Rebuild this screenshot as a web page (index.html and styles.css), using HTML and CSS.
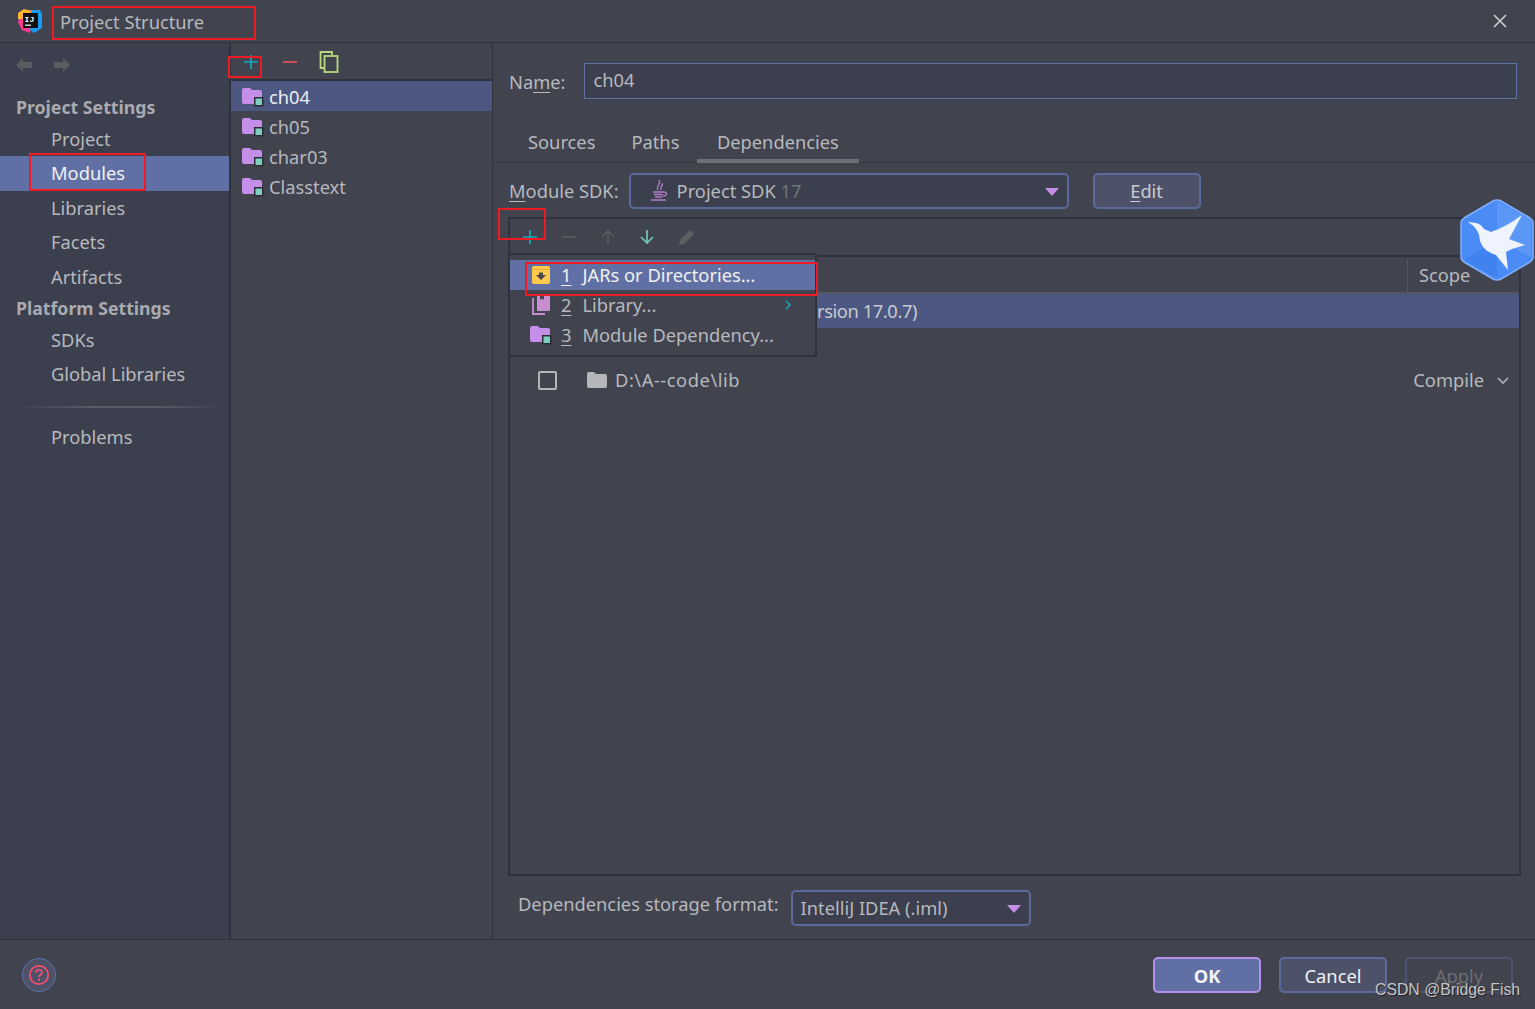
FILE: index.html
```html
<!DOCTYPE html>
<html lang="en">
<head>
<meta charset="utf-8">
<title>Project Structure</title>
<link rel="stylesheet" href="styles.css">
</head>
<body>
<div class="dialog">
  <header class="titlebar">
    <svg class="applogo" viewBox="0 0 24 24" width="24" height="24">
      <path d="M3 3 L14 1 L14 12 L12 24 L4 21 L0 13Z" fill="#ff3d8b"/>
      <path d="M14 1 L22 1 L24 5 L24 19 L16 24 L12 21Z" fill="#1b9cf2"/>
      <path d="M0 4 L6 0 L14 2 L6 10 L0 10Z" fill="#ffb52e"/>
      <rect x="5" y="4" width="15" height="15" fill="#111"/>
      <rect x="7" y="15.5" width="6" height="1.4" fill="#ddd"/>
      <text x="6.6" y="12.5" class="logotext">IJ</text>
    </svg>
    <span class="title">Project Structure</span>
    <svg class="close" viewBox="0 0 14 14" width="14" height="14"><path d="M1 1 L13 13 M13 1 L1 13" stroke="#c9ccd2" stroke-width="1.7"/></svg>
  </header>

  <div class="body">
    <nav class="sidebar">
      <div class="navarrows">
        <svg viewBox="0 0 16 14" width="16" height="14"><path d="M0 7 L7 0 V4 H16 V10 H7 V14Z" fill="#5b5c60"/></svg>
        <svg viewBox="0 0 16 14" width="16" height="14"><path d="M16 7 L9 0 V4 H0 V10 H9 V14Z" fill="#5b5c60"/></svg>
      </div>
      <div class="navhead first">Project Settings</div>
      <div class="navitem">Project</div>
      <div class="navitem active">Modules</div>
      <div class="navitem">Libraries</div>
      <div class="navitem">Facets</div>
      <div class="navitem">Artifacts</div>
      <div class="navhead second">Platform Settings</div>
      <div class="navitem">SDKs</div>
      <div class="navitem">Global Libraries</div>
      <div class="navsep"></div>
      <div class="navitem">Problems</div>
    </nav>

    <section class="modules">
      <div class="modtools">
        <svg viewBox="0 0 16 16" width="16" height="16"><path d="M8 1 V15 M1 8 H15" stroke="#12a9bd" stroke-width="1.7"/></svg>
        <svg viewBox="0 0 16 16" width="16" height="16"><path d="M1 8 H15" stroke="#e5505a" stroke-width="1.7"/></svg>
        <svg viewBox="0 0 20 22" width="20" height="22"><path d="M5 17 H1.5 V1 H13 V4" fill="none" stroke="#b8d97c" stroke-width="1.8"/><rect x="5.5" y="5" width="13" height="16" fill="none" stroke="#b8d97c" stroke-width="1.8"/></svg>
      </div>
      <ul class="modlist">
        <li class="mod selected"><svg class="modicon" viewBox="0 0 22 20" width="22" height="20"><use href="#folder"/></svg>ch04</li>
        <li class="mod"><svg class="modicon" viewBox="0 0 22 20" width="22" height="20"><use href="#folder"/></svg>ch05</li>
        <li class="mod"><svg class="modicon" viewBox="0 0 22 20" width="22" height="20"><use href="#folder"/></svg>char03</li>
        <li class="mod"><svg class="modicon" viewBox="0 0 22 20" width="22" height="20"><use href="#folder"/></svg>Classtext</li>
      </ul>
    </section>

    <main class="detail">
      <div class="namerow">
        <label class="namelabel">Na<u>m</u>e:</label>
        <div class="nameinput">ch04</div>
      </div>
      <div class="tabs">
        <span class="tab">Sources</span>
        <span class="tab">Paths</span>
        <span class="tab current">Dependencies</span>
      </div>
      <div class="sdkrow">
        <span class="sdklabel"><u>M</u>odule SDK:</span>
        <div class="combo sdkcombo">
          <svg class="java" viewBox="0 0 20 24" width="20" height="24">
            <path d="M10 1 C13 5 6 7 9 11 M13 4 C15 7 10 8 12 11" fill="none" stroke="#b07fc7" stroke-width="1.3"/>
            <path d="M4 13 H15 M5 15.5 H14 M6 18 H13 M2 21 H17 M15 13 C19 13 18 17 14 17" fill="none" stroke="#b07fc7" stroke-width="1.3"/>
          </svg>
          <span class="sdkname">Project SDK <span class="dim">17</span></span>
          <i class="caret"></i>
        </div>
        <button class="btn editbtn"><u>E</u>dit</button>
      </div>
      <div class="deps">
        <div class="deptools">
          <svg viewBox="0 0 16 16" width="16" height="16"><path d="M8 1 V15 M1 8 H15" stroke="#12a9bd" stroke-width="1.7"/></svg>
          <svg viewBox="0 0 16 16" width="16" height="16"><path d="M1 8 H15" stroke="#5b5c60" stroke-width="1.7"/></svg>
          <svg viewBox="0 0 16 16" width="16" height="16"><path d="M8 15 V2 M2 8 L8 2 L14 8" fill="none" stroke="#5b5c60" stroke-width="1.7"/></svg>
          <svg viewBox="0 0 16 16" width="16" height="16"><path d="M8 1 V14 M2 8 L8 14 L14 8" fill="none" stroke="#6fc7b5" stroke-width="1.7"/></svg>
          <svg viewBox="0 0 18 18" width="18" height="18"><path d="M1 17 L2 12 L12 2 L16 6 L6 16Z" fill="#5e5f63"/></svg>
        </div>
        <div class="dephead"><span class="scopehead">Scope</span></div>
        <div class="deprow sdkrowsel"><span class="sdktext">rsion 17.0.7)</span></div>
        <div class="deprow lib">
          <i class="check"></i>
          <svg class="libfolder" viewBox="0 0 20 16" width="20" height="16"><path d="M0 2 Q0 0 2 0 H7 L9 2 H18 Q20 2 20 4 V14 Q20 16 18 16 H2 Q0 16 0 14Z" fill="#b4b6ba"/></svg>
          <span class="libpath">D:\A--code\lib</span>
          <span class="scope">Compile</span>
          <svg class="chevron" viewBox="0 0 12 8" width="12" height="8"><path d="M1 1 L6 6 L11 1" fill="none" stroke="#b0b2b8" stroke-width="1.6"/></svg>
        </div>
      </div>
      <div class="storage">
        <span class="storagelabel">Dependencies storage format:</span>
        <div class="combo storecombo"><span>IntelliJ IDEA (.iml)</span><i class="caret"></i></div>
      </div>
    </main>
  </div>

  <footer class="footer">
    <button class="help" aria-label="Help">
      <svg viewBox="0 0 22 22" width="22" height="22"><circle cx="11" cy="11" r="9.2" fill="none" stroke="#ff4d6d" stroke-width="1.7"/><path d="M8 8.6 C8 4.8 14 4.8 14 8.6 C14 10.8 11 10.6 11 13" fill="none" stroke="#ff4d6d" stroke-width="1.7"/><rect x="10" y="14.6" width="2" height="2" fill="#ff4d6d"/></svg>
    </button>
    <div class="actions">
      <button class="btn okbtn">OK</button>
      <button class="btn cancelbtn">Cancel</button>
      <button class="btn applybtn">Apply</button>
    </div>
  </footer>

  <div class="popup">
    <div class="popitem on">
      <svg viewBox="0 0 18 18" width="18" height="18"><rect width="18" height="18" rx="2" fill="#ffc94d"/><path d="M0 3.5 H18" stroke="#e9ad35"/><path d="M4 9 H14 L9 14Z M7 6.5 H11 V10 H7Z" fill="#4a4a55"/></svg>
      <span class="num">1</span><span class="poptext">JARs or Directories...</span>
    </div>
    <div class="popitem">
      <svg viewBox="0 0 18 20" width="18" height="20"><path d="M1 3 V19 H13" fill="none" stroke="#c88fd0" stroke-width="1.8"/><rect x="5" y="0" width="13" height="16" rx="1" fill="#c88fd0"/><path d="M8 0 H12 V5 L10 3.5 L8 5Z" fill="#41434f"/></svg>
      <span class="num">2</span><span class="poptext">Library...</span>
      <svg class="sub" viewBox="0 0 6 10" width="6" height="10"><path d="M1 1 L5 5 L1 9" fill="none" stroke="#12a9bd" stroke-width="1.5"/></svg>
    </div>
    <div class="popitem">
      <svg viewBox="0 0 22 20" width="22" height="20" class="popfolder"><use href="#folder"/></svg>
      <span class="num">3</span><span class="poptext">Module Dependency...</span>
    </div>
  </div>

  <svg class="bird" viewBox="0 0 74 82" width="74" height="82">
    <path d="M37 1 Q39 1 41 2 L70 19 Q73 21 73 24 V58 Q73 61 70 63 L41 80 Q37 82 33 80 L4 63 Q1 61 1 58 V24 Q1 21 4 19 L33 2 Q35 1 37 1Z" fill="#4a8bf5" stroke="#7fb0fa" stroke-width="1.5"/>
    <path d="M37 2 L71 21 V58 L37 41Z" fill="#5a97f7"/>
    <path d="M4 61 L37 41 L37 79Z" fill="#4183ee"/>
    <path d="M8 23 L16 24 Q21 25 24 30 L31 33 Q46 28 62 16 L55 29 L49 40 L65 46 L52 50 L46 53 L48 71 L36 56 Q23 52 20 42 Q20 30 8 23Z" fill="#eef3fd"/>
  </svg>

  <span class="mark mark-title"></span>
  <span class="mark mark-add"></span>
  <span class="mark mark-modules"></span>
  <span class="mark mark-depadd"></span>
  <span class="mark mark-jars"></span>
  <span class="watermark">CSDN @Bridge Fish</span>

  <svg class="defs" width="0" height="0">
    <defs>
      <g id="folder">
        <path d="M0 3 Q0 1 2 1 H8 L10 3 H18 Q20 3 20 5 V15 Q20 17 18 17 H2 Q0 17 0 15Z" fill="#c58ee8"/>
        <rect x="12" y="10" width="9.5" height="9.5" fill="#2b2d36"/>
        <rect x="13.5" y="11.5" width="6.5" height="6.5" fill="#7fcfc0"/>
      </g>
    </defs>
  </svg>
</div>
</body>
</html>
```
FILE: styles.css
```css
* { box-sizing: border-box; }
html, body { margin: 0; padding: 0; }
body { width: 1535px; height: 1009px; overflow: hidden; background: #41434f; }
.dialog {
  position: relative; width: 1535px; height: 1009px;
  display: flex; flex-direction: column;
  background: #41434f; color: #b7b9bd;
  font-family: "Noto Sans", "Open Sans", sans-serif; font-size: 18.3px;
}
u { text-underline-offset: 3px; }

.titlebar { height: 43px; flex: none; display: flex; align-items: center; padding: 0 28px 0 18px; border-bottom: 1px solid #2f313b; }
.applogo { flex: none; margin-right: 18px; }
.logotext { font: bold 8px "Liberation Mono", monospace; fill: #fff; }
.title { flex: 1; color: #b7b9bd; }
.close { flex: none; }

.body { flex: 1; display: flex; min-height: 0; }
.sidebar { width: 231px; flex: none; background: #3c3f4d; border-right: 2px solid #2f313b; }
.navarrows { display: flex; gap: 22px; padding: 15px 0 0 16px; height: 48px; }
.navhead { font-weight: 700; font-size: 17.7px; color: #a9abb0; padding-left: 16px; }
.navhead.first { height: 30.5px; line-height: 32px; }
.navhead.second { height: 28.5px; line-height: 28px; }
.navitem { height: 34.5px; line-height: 34px; padding-left: 51px; }
.navitem.active { background: #6070a4; color: #f0f0f2; }
.navsep { height: 2px; margin: 14px 8px 12.5px 12px; background: linear-gradient(90deg, #3c3f4d, #5a5c66 40%, #5a5c66 70%, #3c3f4d); }

.modules { width: 262px; flex: none; border-right: 1px solid #2f313b; }
.modtools { height: 38px; display: flex; align-items: center; gap: 23px; padding: 2px 0 0 12px; border-bottom: 2px solid #2f313b; }
.modtools svg:last-child { margin-left: -2px; }
.modlist { list-style: none; margin: 0; padding: 0; }
.mod { height: 30px; display: flex; align-items: center; gap: 5px; padding-left: 11px; }
.mod.selected { background: #4c5882; color: #eceef2; }
.modicon { flex: none; margin-top: 2px; }

.detail { flex: 1; min-width: 0; display: flex; flex-direction: column; padding-top: 20px; }
.namerow { display: flex; align-items: center; gap: 19px; padding: 0 18px 0 16px; }
.namelabel { flex: none; }
.nameinput { flex: 1; height: 36px; line-height: 31px; padding-left: 8px; border: 1px solid #6070a4; background: #3c3f4d; }
.tabs { display: flex; height: 41px; margin-top: 23px; padding-left: 16.5px; border-bottom: 1px solid #33353f; }
.tab { padding: 0 18.5px; height: 41px; line-height: 40px; }
.tab + .tab { margin-left: -1px; }
.tab.current { border-bottom: 4px solid #6e7078; padding: 0 20px; }
.sdkrow { display: flex; align-items: center; height: 36px; margin-top: 10px; padding-left: 16px; }
.sdklabel { flex: none; margin-right: 10px; margin-top: -2px; }
.combo { display: flex; align-items: center; position: relative; height: 36px; border: 2px solid #5a6a9c; border-radius: 5px; background: #3c3f4d; }
.sdkcombo { width: 440px; padding-left: 18px; gap: 8px; }
.sdkname { margin-top: -2px; }
.java { flex: none; }
.dim { color: #737478; }
.caret { position: absolute; right: 8px; top: 13px; width: 0; height: 0; border-left: 7px solid transparent; border-right: 7px solid transparent; border-top: 8px solid #c58ee8; }
.btn { font: inherit; color: #c9cbd0; border: 2px solid #5a6a9c; border-radius: 5px; background: #4e5269; height: 36px; padding: 0; }
.editbtn { width: 108px; margin-left: 24px; padding-bottom: 2px; }

.deps { flex: 1; margin: 8px 14px 0 15px; border: 2px solid #2f313b; display: flex; flex-direction: column; min-height: 0; }
.deptools { height: 38px; flex: none; display: flex; align-items: center; gap: 23px; padding-left: 12px; border-bottom: 2px solid #2f313b; }
.dephead { height: 35px; flex: none; display: flex; justify-content: flex-end; }
.scopehead { width: 112px; border-left: 1px solid #55575f; padding-left: 11px; line-height: 32px; margin-top: 2px; height: 33px; }
.deprow { display: flex; align-items: center; flex: none; }
.sdkrowsel { height: 36px; background: #4c5882; color: #c9cbd0; padding: 0 0 2px 307px; border-top: 2px solid #55575f; }
.sdktext { letter-spacing: -.4px; }
.lib { height: 36px; margin-top: 34px; padding: 0 10px 0 28px; }
.check { width: 19px; height: 19px; border: 2px solid #b4b6ba; border-radius: 2px; flex: none; }
.libfolder { flex: none; margin-left: 30px; }
.libpath { flex: 1; margin: -2px 0 0 8px; letter-spacing: .55px; }
.scope { margin: -2px 13px 0 0; }
.chevron { margin-top: 1px; }

.storage { height: 63px; flex: none; display: flex; align-items: center; padding-left: 25px; }
.storagelabel { margin-right: 12px; margin-top: -9px; }
.storecombo { width: 240px; padding-left: 8px; }

.footer { height: 70px; flex: none; display: flex; align-items: center; justify-content: space-between; padding: 0 22px 0 22px; border-top: 1px solid #2f313b; }
.help { width: 34px; height: 34px; border-radius: 50%; border: 1.5px solid #5f6fa8; background: #4e5269; padding: 0; display: flex; align-items: center; justify-content: center; }
.actions { display: flex; gap: 18px; }
.actions .btn { width: 108px; padding-top: 1px; }
.okbtn { background: #6070a4; border-color: #b68fe8; color: #f4f4f6; font-weight: 700; }
.cancelbtn { color: #f0f0f2; background: #4e5269; }
.applybtn { background: transparent; border-color: #4f5570; color: #6d6e72; }

.popup { position: absolute; left: 508px; top: 253px; width: 309px; height: 104px; background: #41434f; border: 2px solid #2f313b; padding-top: 5px; }
.popitem { height: 30px; display: flex; align-items: center; padding-left: 22px; position: relative; }
.popitem.on { background: #6070a4; color: #f0f0f2; }
.popitem svg:first-child { flex: none; width: 18px; margin-right: 11px; }
.popitem svg.popfolder { width: 22px; margin-left: -2px; margin-right: 9px; }
.num { text-decoration: underline; text-underline-offset: 3px; margin: -2px 11px 0 0; }
.poptext { margin-top: -2px; }
.sub { position: absolute; right: 24px; top: 10px; }

.bird { position: absolute; left: 1460px; top: 199px; }
.mark { position: absolute; border: 2px solid #ed1c24; pointer-events: none; }
.mark-title { left: 52px; top: 6px; width: 204px; height: 34px; }
.mark-add { left: 228px; top: 56px; width: 34px; height: 22px; }
.mark-modules { left: 29px; top: 153px; width: 117px; height: 38px; }
.mark-depadd { left: 498px; top: 208px; width: 48px; height: 32px; }
.mark-jars { left: 525px; top: 262px; width: 293px; height: 34px; }
.watermark { position: absolute; left: 1375px; top: 981px; font: 15.8px "Liberation Sans", sans-serif; color: #c4c5c8; text-shadow: 1px 1px 1px #222; white-space: nowrap; }
.defs { position: absolute; }
```
